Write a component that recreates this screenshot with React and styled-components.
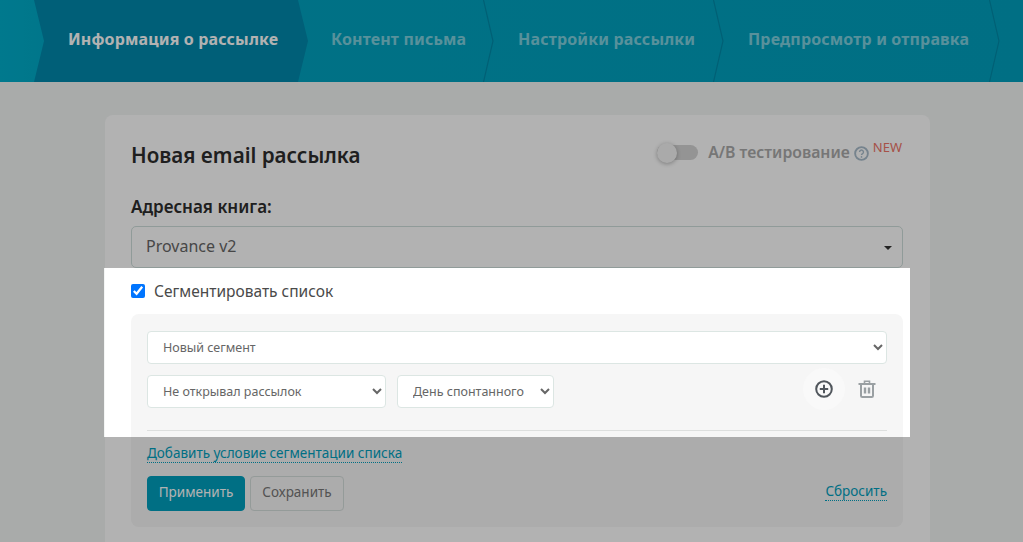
import React from 'react';
import styled, { createGlobalStyle } from 'styled-components';

const GlobalStyle = createGlobalStyle`
  html, body {
    margin: 0;
    height: 100%;
    overflow: hidden;
    background: #f3f5f4;
  }
  body {
    font-family: "Noto Sans", "Open Sans", sans-serif;
    color: #333;
  }
  * { box-sizing: border-box; }
`;

const Page = styled.div`
  position: relative;
  width: 1023px;
  height: 542px;
  overflow: hidden;
`;

const Spotlight = styled.div`
  position: absolute;
  left: 104px;
  top: 268px;
  width: 806px;
  height: 169px;
  box-shadow: 0 0 0 2000px rgba(0, 0, 0, 0.3);
  pointer-events: none;
  z-index: 5;
`;

const Steps = styled.nav`
  display: flex;
  height: 82px;
  padding-left: 34px;
  background: linear-gradient(90deg, #00aecb 0, #00a3c0 120px, #00a0be 100%);
`;

const Step = styled.div`
  position: relative;
  flex: none;
  width: ${p => p.$width}px;
  padding-left: ${p => p.$inset}px;
  padding-bottom: 5px;
  display: flex;
  align-items: center;
  font-size: 16px;
  font-weight: 700;
  letter-spacing: ${p => p.$spacing}px;
  white-space: nowrap;
  color: ${p => (p.$active ? '#fff' : 'rgba(255, 255, 255, 0.5)')};

  ${p => p.$active && `
    &::before {
      content: "";
      position: absolute;
      inset: 0 -10px 0 0;
      background: #0089ac;
      clip-path: polygon(0 0, calc(100% - 10px) 0, 100% 50%, calc(100% - 10px) 100%, 0 100%, 10px 50%);
    }
  `}
`;

const StepLabel = styled.span`
  position: relative;
`;

const Chevron = styled.svg`
  position: absolute;
  top: 0;
  right: -10px;
  width: 11px;
  height: 82px;
`;

const StepArrow = () => (
  <Chevron viewBox="0 0 11 82">
    <polyline points="0.5,0 10,41 0.5,82" fill="none" stroke="#008aa8" strokeWidth="1.2" />
  </Chevron>
);

const Card = styled.main`
  width: 825px;
  margin: 33px 0 0 105px;
  padding: 20px 27px 40px 26px;
  background: #fff;
  border-radius: 8px;
`;

const CardHead = styled.div`
  display: flex;
  align-items: flex-start;
  justify-content: space-between;
  height: 44px;
`;

const Title = styled.h1`
  margin: 7px 0 0;
  font-size: 20.6px;
  line-height: 27px;
  font-weight: 600;
  color: #2d2d2d;
`;

const AbSwitch = styled.div`
  display: flex;
  align-items: center;
  height: 34px;
  margin-right: 1px;
`;

const Track = styled.div`
  position: relative;
  width: 41px;
  height: 15px;
  margin-right: 10px;
  border-radius: 8px;
  background: #d4d4d4;
`;

const Knob = styled.div`
  position: absolute;
  left: 0;
  top: -2px;
  width: 20px;
  height: 20px;
  border-radius: 50%;
  background: #f4f4f4;
  box-shadow: 0 1px 4px rgba(0, 0, 0, 0.3);
`;

const AbLabel = styled.span`
  font-size: 15.8px;
  font-weight: 600;
  color: #aaa;
`;

const HelpIcon = styled.svg`
  width: 15px;
  height: 15px;
  margin: 2px 4px 0 4px;
`;

const NewTag = styled.sup`
  align-self: flex-start;
  margin-top: 3px;
  font-size: 13px;
  line-height: 18px;
  color: #ee7467;
  vertical-align: baseline;
`;

const FieldLabel = styled.label`
  display: block;
  font-size: 17px;
  line-height: 20px;
  font-weight: 600;
  color: #2d2d2d;
  margin: 18px 0 9px;
`;

const BookSelect = styled.div`
  position: relative;
  height: 42px;
  padding: 0 14px 2px;
  display: flex;
  align-items: center;
  border: 1px solid #cfdedb;
  border-radius: 5px;
  font-size: 16px;
  color: #666;
  background: #fff;

  &::after {
    content: "";
    position: absolute;
    right: 10px;
    top: 19px;
    border-top: 4px solid #333;
    border-left: 4px solid transparent;
    border-right: 4px solid transparent;
  }
`;

const SegmentToggle = styled.label`
  display: flex;
  align-items: center;
  height: 46px;
  padding-bottom: 1px;
  font-size: 15.5px;
  color: #4a4a4a;
`;

const Checkbox = styled.input`
  width: 14px;
  height: 14px;
  margin: 0 9px 0 0;
`;

const SegmentPanel = styled.section`
  padding: 17px 16px 16px;
  background: #f6f6f6;
  border-radius: 8px;
`;

const Select = styled.select`
  display: block;
  width: ${p => (p.$width ? `${p.$width}px` : '100%')};
  height: 33px;
  padding: 0 8px 0 11px;
  background: #fff;
  border: 1px solid #dce6e3;
  border-radius: 4px;
  font-family: inherit;
  font-size: 12.5px;
  color: #666;
`;

const ConditionRow = styled.div`
  display: flex;
  gap: 11px;
  margin-top: 11px;
  height: 33px;
`;

const RowActions = styled.div`
  display: flex;
  align-items: center;
  gap: 13px;
  margin-left: auto;
  margin-right: 11px;
  margin-top: -5px;
`;

const AddButton = styled.button`
  width: 42px;
  height: 42px;
  padding: 0;
  display: flex;
  align-items: center;
  justify-content: center;
  border: 0;
  border-radius: 50%;
  background: #f9f9f9;
  color: #50565c;
`;

const RemoveButton = styled.button`
  width: 18px;
  height: 18px;
  padding: 0;
  border: 0;
  background: none;
  color: #9aa0a3;
`;

const Divider = styled.hr`
  height: 1px;
  margin: 22px 0 10px;
  border: 0;
  background: #dddfde;
`;

const TextLink = styled.a`
  display: inline-block;
  font-size: 13.5px;
  line-height: 17px;
  color: #00a0be;
  border-bottom: 1px dotted #00a0be;
`;

const ActionRow = styled.div`
  display: flex;
  align-items: center;
  gap: 5px;
  margin-top: 13px;
`;

const Button = styled.button`
  height: 35px;
  width: ${p => p.$width}px;
  padding: 0 0 3px;
  border-radius: 4px;
  font-family: inherit;
  font-size: 13.5px;
  border: 1px solid ${p => (p.$primary ? '#00a0be' : '#d5dedc')};
  background: ${p => (p.$primary ? '#00a0be' : 'transparent')};
  color: ${p => (p.$primary ? '#fff' : '#777')};
`;

const ResetLink = styled(TextLink)`
  margin-left: auto;
  margin-bottom: 3px;
`;

const App = () => (
  <Page>
    <GlobalStyle />
    <Steps>
      <Step $active $width={264} $inset={34} $spacing={0.15}>
        <StepLabel>Информация о рассылке</StepLabel>
      </Step>
      <Step $width={186} $inset={33} $spacing={0.15}>
        <StepLabel>Контент письма</StepLabel>
        <StepArrow />
      </Step>
      <Step $width={230} $inset={34} $spacing={0.15}>
        <StepLabel>Настройки рассылки</StepLabel>
        <StepArrow />
      </Step>
      <Step $width={276} $inset={34} $spacing={0.15}>
        <StepLabel>Предпросмотр и отправка</StepLabel>
        <StepArrow />
      </Step>
    </Steps>

    <Card>
      <CardHead>
        <Title>Новая email рассылка</Title>
        <AbSwitch>
          <Track><Knob /></Track>
          <AbLabel>A/B тестирование</AbLabel>
          <HelpIcon viewBox="0 0 16 16">
            <circle cx="8" cy="8" r="6.8" fill="none" stroke="#a9bccb" strokeWidth="2" />
            <path d="M5.9 6.4a2.1 2.1 0 1 1 3.2 1.8c-.7.4-1.1.8-1.1 1.5" fill="none" stroke="#a9bccb" strokeWidth="1.5" />
            <circle cx="8" cy="11.6" r="0.9" fill="#a9bccb" />
          </HelpIcon>
          <NewTag>NEW</NewTag>
        </AbSwitch>
      </CardHead>

      <FieldLabel>Адресная книга:</FieldLabel>
      <BookSelect>Provance v2</BookSelect>

      <SegmentToggle>
        <Checkbox type="checkbox" defaultChecked />
        Сегментировать список
      </SegmentToggle>

      <SegmentPanel>
        <Select defaultValue="new">
          <option value="new">Новый сегмент</option>
        </Select>
        <ConditionRow>
          <Select $width={239} defaultValue="a">
            <option value="a">Не открывал рассылок</option>
          </Select>
          <Select $width={157} defaultValue="b">
            <option value="b">День спонтанного</option>
          </Select>
          <RowActions>
            <AddButton aria-label="add">
              <svg width="18" height="18" viewBox="0 0 18 18" fill="none" stroke="currentColor" strokeWidth="2">
                <circle cx="9" cy="9" r="7.8" />
                <path d="M9 4.8v8.4M4.8 9h8.4" />
              </svg>
            </AddButton>
            <RemoveButton aria-label="remove">
              <svg width="18" height="18" viewBox="0 0 18 18" fill="none" stroke="currentColor" strokeWidth="2.4">
                <path d="M0.5 4h17" strokeWidth="2" />
                <path d="M6.5 3.5V1.2h5v2.3" strokeWidth="1.6" />
                <path d="M3 4.5v11.2A1.3 1.3 0 0 0 4.3 17h9.4a1.3 1.3 0 0 0 1.3-1.3V4.5" strokeWidth="2" />
                <path d="M7 7.5v6M11 7.5v6" />
              </svg>
            </RemoveButton>
          </RowActions>
        </ConditionRow>
        <Divider />
        <TextLink>Добавить условие сегментации списка</TextLink>
        <ActionRow>
          <Button $primary $width={98}>Применить</Button>
          <Button $width={94}>Сохранить</Button>
          <ResetLink>Сбросить</ResetLink>
        </ActionRow>
      </SegmentPanel>
    </Card>
    <Spotlight />
  </Page>
);

export default App;
